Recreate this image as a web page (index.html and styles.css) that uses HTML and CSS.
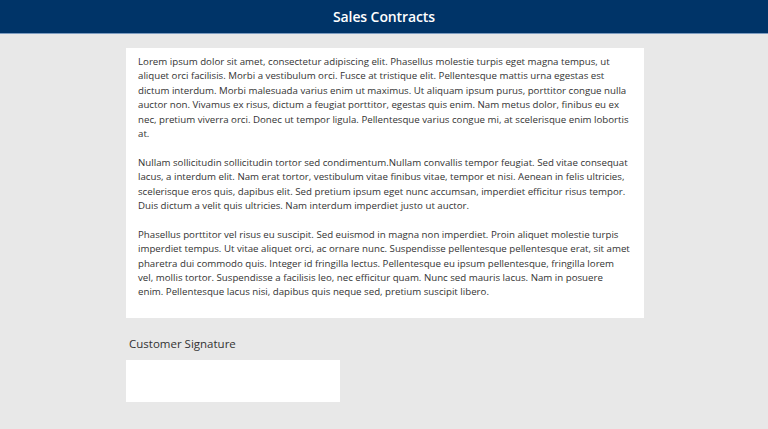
FILE: index.html
```html
<!DOCTYPE html>
<html>
<head>
<meta charset="utf-8">
<link rel="stylesheet" href="styles.css">
</head>
<body>
<header class="topbar"><h1 class="title">Sales Contracts</h1></header>
<main class="content">
  <section class="card">
    <p>Lorem ipsum dolor sit amet, consectetur adipiscing elit. Phasellus molestie turpis eget magna tempus, ut aliquet orci facilisis. Morbi a vestibulum orci. Fusce at tristique elit. Pellentesque mattis urna egestas est dictum interdum. Morbi malesuada varius enim ut maximus. Ut aliquam ipsum purus, porttitor congue nulla auctor non. Vivamus ex risus, dictum a feugiat porttitor, egestas quis enim. Nam metus dolor, finibus eu ex nec, pretium viverra orci. Donec ut tempor ligula. Pellentesque varius congue mi, at scelerisque enim lobortis at.</p>
    <p>Nullam sollicitudin sollicitudin tortor sed condimentum.Nullam convallis tempor feugiat. Sed vitae consequat lacus, a interdum elit. Nam erat tortor, vestibulum vitae finibus vitae, tempor et nisi. Aenean in felis ultricies, scelerisque eros quis, dapibus elit. Sed pretium ipsum eget nunc accumsan, imperdiet efficitur risus tempor. Duis dictum a velit quis ultricies. Nam interdum imperdiet justo ut auctor.</p>
    <p>Phasellus porttitor vel risus eu suscipit. Sed euismod in magna non imperdiet. Proin aliquet molestie turpis imperdiet tempus. Ut vitae aliquet orci, ac ornare nunc. Suspendisse pellentesque pellentesque erat, sit amet pharetra dui commodo quis. Integer id fringilla lectus. Pellentesque eu ipsum pellentesque, fringilla lorem vel, mollis tortor. Suspendisse a facilisis leo, nec efficitur quam. Nunc sed mauris lacus. Nam in posuere enim. Pellentesque lacus nisi, dapibus quis neque sed, pretium suscipit libero.</p>
  </section>
  <h2 class="sig-label">Customer Signature</h2>
  <div class="sig-box"></div>
</main>
</body>
</html>
```
FILE: styles.css
```css
html, body {
  margin: 0;
  padding: 0;
}
body {
  background: #e8e8e8;
  font-family: "Open Sans", "Noto Sans", sans-serif;
  width: 768px;
  height: 429px;
  overflow: hidden;
}
.topbar {
  background: #003468;
  height: 33px;
  border-bottom: 1px solid #7d9cc0;
  display: flex;
  align-items: center;
  justify-content: center;
}
.title {
  margin: 0;
  color: #ffffff;
  font-size: 14px;
  font-weight: 600;
  letter-spacing: -0.1px;
}
.content {
  padding: 14px 0 0 126px;
}
.card {
  background: #ffffff;
  width: 492px;
  padding: 7px 14px 18px 12px;
}
.card p {
  margin: 0 0 14.4px 0;
  font-size: 9.7px;
  line-height: 14.4px;
  color: #333333;
}
.card p:last-child {
  margin-bottom: 0;
}
.sig-label {
  margin: 18px 0 0 3px;
  font-size: 11.5px;
  font-weight: 400;
  color: #333333;
  line-height: 16px;
}
.sig-box {
  margin-top: 8px;
  width: 214px;
  height: 42px;
  background: #ffffff;
}
```
